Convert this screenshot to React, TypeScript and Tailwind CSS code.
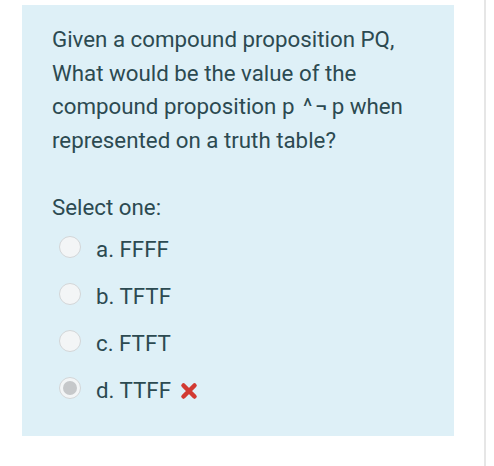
const OPTIONS = [
  { label: "a. FFFF", checked: false },
  { label: "b. TFTF", checked: false },
  { label: "c. FTFT", checked: false },
  { label: "d. TTFF", checked: true, wrong: true },
];

function Radio({ checked }: { checked: boolean }) {
  return (
    <span className="flex h-[22px] w-[22px] shrink-0 items-center justify-center rounded-full border border-[#d3d6d8] bg-[#f3f5f6]">
      {checked && <span className="h-[14px] w-[14px] rounded-full bg-[#c6c8ca]" />}
    </span>
  );
}

function WrongMark() {
  return (
    <svg width="18" height="18" viewBox="0 0 18 18" className="ml-[9px]">
      <path d="M3.5 3.5 L14.5 14.5 M14.5 3.5 L3.5 14.5" stroke="#d23a32" strokeWidth="4.5" strokeLinecap="round" />
    </svg>
  );
}

export default function App() {
  return (
    <div className="flex h-[466px] w-[494px] bg-white font-['Roboto',sans-serif] text-[#2c4a51]">
      <div className="ml-[22px] mt-[5px] h-[431px] w-[432px] bg-[#def0f7] pl-[30px] pr-[10px] pt-[18px]">
        <p className="text-[22.3px] leading-[33.5px]">
          Given a compound proposition PQ,
          <br />
          What would be the value of the
          <br />
          compound proposition p <span className="mx-[3px]">^</span>
          <span className="mr-[4px]">¬</span>p when
          <br />
          represented on a truth table?
        </p>
        <p className="mt-[33px] text-[22.3px] leading-[34px]">Select one:</p>
        <div className="mt-[2px] flex flex-col">
          {OPTIONS.map((o) => (
            <div key={o.label} className="flex h-[47px] items-center pl-[7px]">
              <span className="-mt-[6px]">
                <Radio checked={o.checked} />
              </span>
              <span className="ml-[15px] text-[22.3px]">{o.label}</span>
              {o.wrong && <WrongMark />}
            </div>
          ))}
        </div>
      </div>
      <div className="ml-[30px] h-full w-[2px] bg-[#e6e6e6]" />
    </div>
  );
}
